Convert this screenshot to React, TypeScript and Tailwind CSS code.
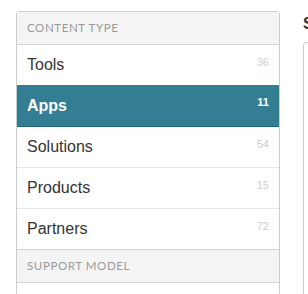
import { ReactNode } from 'react'

type Item = { label: string; count: number; active?: boolean }

const contentTypes: Item[] = [
  { label: 'Tools', count: 36 },
  { label: 'Apps', count: 11, active: true },
  { label: 'Solutions', count: 54 },
  { label: 'Products', count: 15 },
  { label: 'Partners', count: 72 },
]

const GroupHeader = ({ children }: { children: ReactNode }) => (
  <div className="flex h-[33px] items-center border-b border-[#d4d4d4] bg-[#f4f4f4] px-[10px] font-['Lato',sans-serif] text-[11.5px] tracking-[0.6px] uppercase text-[#9a9a9a]">
    {children}
  </div>
)

const FilterRow = ({ item }: { item: Item }) => {
  if (item.active) {
    return (
      <div className="relative -mt-px flex h-[42px] items-center justify-between border-b border-[#1f6780] bg-[#337e93] px-[10px] font-['Liberation_Sans',Arial,sans-serif] text-white">
        <span className="text-[16px] font-bold">{item.label}</span>
        <span className="mb-[6px] text-[11px] font-bold">{item.count}</span>
      </div>
    )
  }
  return (
    <div className="flex h-[41px] items-center justify-between border-b border-[#e6e6e6] bg-white px-[10px] font-['Liberation_Sans',Arial,sans-serif] text-[#333333]">
      <span className="text-[16px]">{item.label}</span>
      <span className="mb-[6px] text-[11px] text-[#cccccc]">{item.count}</span>
    </div>
  )
}

const App = () => {
  return (
    <div className="flex h-[294px] w-[308px] gap-[23px] overflow-hidden bg-white pl-4 pt-[11px] font-['Liberation_Sans',Arial,sans-serif]">
      <aside className="w-[264px] shrink-0 rounded-t-[3px] border border-[#cccccc]">
        <GroupHeader>Content Type</GroupHeader>
        {contentTypes.map((item) => (
          <FilterRow key={item.label} item={item} />
        ))}
        <div className="-mt-px border-t border-[#d4d4d4]">
          <GroupHeader>Support Model</GroupHeader>
        </div>
        <div className="h-[60px] bg-white" />
      </aside>

      <section className="min-w-[200px] shrink-0">
        <h2 className="mt-[3px] text-[16px] font-bold leading-5 text-[#333333]">Sort by</h2>
        <div className="mt-[8px] h-[300px] rounded-t-[3px] border border-[#cccccc] bg-white" />
      </section>
    </div>
  )
}

export default App
